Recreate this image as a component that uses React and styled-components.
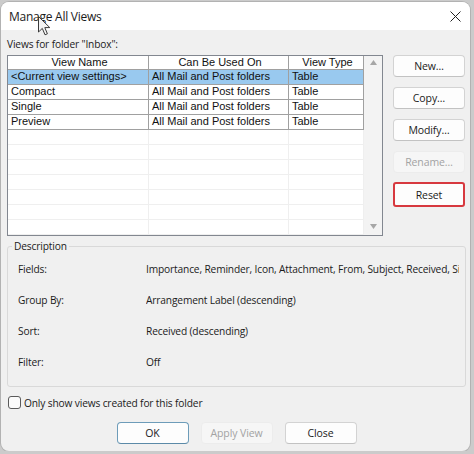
import React from 'react'
import styled, { createGlobalStyle } from 'styled-components'

const GlobalStyle = createGlobalStyle`
  html, body {
    margin: 0;
    padding: 0;
    background: #cbcbcb;
  }
  body {
    font-family: "Open Sans", "Noto Sans", sans-serif;
    color: #1b1b1b;
  }
`

const Window = styled.div`
  position: relative;
  width: 469px;
  height: 449px;
  margin: 2px 0 0 1px;
  background: #f0f0f0;
  border-radius: 8px;
  overflow: hidden;
  display: flex;
  flex-direction: column;
  box-shadow: 0 0 0 1px rgba(0, 0, 0, 0.12);
`

const TitleBar = styled.div`
  height: 28px;
  flex: none;
  background: #ffffff;
  display: flex;
  align-items: center;
  justify-content: space-between;
  padding-left: 8px;
`

const Title = styled.span`
  font-size: 12px;
  letter-spacing: -0.25px;
  color: #1b1b1b;
`

const CloseBox = styled.div`
  width: 30px;
  height: 28px;
  display: flex;
  align-items: center;
  justify-content: center;
`

const Body = styled.div`
  flex: 1;
  display: flex;
  flex-direction: column;
  padding: 7px 4px 7px 6px;
  font-size: 10.2px;
  letter-spacing: -0.15px;
`

const Label = styled.div`
  height: 14px;
  line-height: 14px;
  margin-bottom: 4px;
`

const TopSection = styled.div`
  display: flex;
  gap: 10px;
`

const ListBox = styled.div`
  width: 376px;
  height: 181px;
  box-sizing: border-box;
  border: 1px solid #828790;
  background: #ffffff;
  display: flex;
`

const Grid = styled.div`
  width: 356px;
  overflow: hidden;
  font-family: "Liberation Sans", Arial, sans-serif;
  font-size: 11px;
  letter-spacing: 0;
`

const Row = styled.div`
  display: grid;
  grid-template-columns: 141px 140px 75px;
  height: ${p => (p.$header ? 14 : 15)}px;
  background: ${p => (p.$selected ? '#99c9ef' : '#ffffff')};
`

const Cell = styled.div`
  box-sizing: border-box;
  border-right: 1px solid ${p => (p.$faint ? '#efefef' : '#a0a0a0')};
  border-bottom: 1px solid ${p => (p.$faint ? '#efefef' : '#a0a0a0')};
  padding-left: 3px;
  line-height: 13px;
  white-space: nowrap;
  overflow: hidden;
  text-align: ${p => (p.$center ? 'center' : 'left')};
  color: #111;
`

const ScrollBar = styled.div`
  width: 18px;
  background: #f3f3f3;
  display: flex;
  flex-direction: column;
  justify-content: space-between;
  align-items: center;
  padding: 4px 0 6px;
  box-sizing: border-box;
`

const ButtonColumn = styled.div`
  display: flex;
  flex-direction: column;
  gap: 10px;
`

const Button = styled.button`
  width: 72px;
  height: ${p => (p.$highlight ? 25 : 22)}px;
  margin-top: ${p => (p.$highlight ? -1 : 0)}px;
  box-sizing: border-box;
  padding: 0;
  font-family: "Open Sans", "Noto Sans", sans-serif;
  font-size: 10.5px;
  letter-spacing: -0.1px;
  color: ${p => (p.disabled ? '#a3a3a3' : '#1b1b1b')};
  background: ${p => (p.disabled ? '#f6f6f6' : '#fdfdfd')};
  border: ${p =>
    p.$highlight
      ? '2px solid #d7393f'
      : p.$primary
      ? '1px solid #6d9cb9'
      : p.disabled
      ? '1px solid #ececec'
      : '1px solid #d3d3d3'};
  border-bottom-color: ${p =>
    p.$highlight ? '#d7393f' : p.$primary ? '#5b8aa8' : p.disabled ? '#ececec' : '#c2c2c2'};
  border-radius: ${p => (p.$highlight ? 3 : 4)}px;
`

const Group = styled.fieldset`
  margin: 3px 0 0 0;
  padding: 0 6px 9px 10px;
  border: 1px solid #d9d9d9;
  border-radius: 3px;
  min-width: 0;
`

const Legend = styled.legend`
  margin-left: -6px;
  padding: 0 2px;
  line-height: 14px;
`

const DescRow = styled.div`
  display: grid;
  grid-template-columns: 128px 1fr;
  height: 31px;
  align-items: center;
`

const DescValue = styled.span`
  white-space: nowrap;
  overflow: hidden;
`

const CheckRow = styled.label`
  margin-top: 8px;
  height: 15px;
  display: flex;
  align-items: center;
  gap: 3px;
  margin-left: 1px;
`

const CheckBox = styled.span`
  width: 13px;
  height: 13px;
  box-sizing: border-box;
  border: 1px solid #5a5a5a;
  border-radius: 3px;
  background: #fbfbfb;
`

const FooterButtons = styled.div`
  margin-top: 12px;
  display: flex;
  justify-content: center;
  gap: 12px;
`

const Cursor = styled.svg`
  position: absolute;
  left: 37px;
  top: 14px;
`

const views = [
  { name: '<Current view settings>', on: 'All Mail and Post folders', type: 'Table' },
  { name: 'Compact', on: 'All Mail and Post folders', type: 'Table' },
  { name: 'Single', on: 'All Mail and Post folders', type: 'Table' },
  { name: 'Preview', on: 'All Mail and Post folders', type: 'Table' },
]

const description = [
  ['Fields:', 'Importance, Reminder, Icon, Attachment, From, Subject, Received, Size, Categories'],
  ['Group By:', 'Arrangement Label (descending)'],
  ['Sort:', 'Received (descending)'],
  ['Filter:', 'Off'],
]

const Arrow = ({ down }) => (
  <svg width="7" height="5" viewBox="0 0 7 5">
    <polygon points={down ? '0,0 7,0 3.5,5' : '0,5 7,5 3.5,0'} fill="#a6a6a6" />
  </svg>
)

export default function App() {
  return (
    <>
      <GlobalStyle />
      <Window>
        <TitleBar>
          <Title>Manage All Views</Title>
          <CloseBox>
            <svg width="11" height="11" viewBox="0 0 11 11">
              <path d="M0.5 0.5 L10.5 10.5 M10.5 0.5 L0.5 10.5" stroke="#222" strokeWidth="1" />
            </svg>
          </CloseBox>
        </TitleBar>
        <Body>
          <Label>Views for folder "Inbox":</Label>
          <TopSection>
            <ListBox>
              <Grid>
                <Row $header>
                  <Cell $center>View Name</Cell>
                  <Cell $center>Can Be Used On</Cell>
                  <Cell $center>View Type</Cell>
                </Row>
                {views.map((v, i) => (
                  <Row key={v.name} $selected={i === 0}>
                    <Cell>{v.name}</Cell>
                    <Cell>{v.on}</Cell>
                    <Cell>{v.type}</Cell>
                  </Row>
                ))}
                {Array.from({ length: 7 }).map((_, i) => (
                  <Row key={'f' + i}>
                    <Cell $faint />
                    <Cell $faint />
                    <Cell $faint />
                  </Row>
                ))}
              </Grid>
              <ScrollBar>
                <Arrow />
                <Arrow down />
              </ScrollBar>
            </ListBox>
            <ButtonColumn>
              <Button>New…</Button>
              <Button>Copy…</Button>
              <Button>Modify…</Button>
              <Button disabled>Rename…</Button>
              <Button $highlight>Reset</Button>
            </ButtonColumn>
          </TopSection>
          <Group>
            <Legend>Description</Legend>
            {description.map(([k, v]) => (
              <DescRow key={k}>
                <span>{k}</span>
                <DescValue>{v}</DescValue>
              </DescRow>
            ))}
          </Group>
          <CheckRow>
            <CheckBox />
            Only show views created for this folder
          </CheckRow>
          <FooterButtons>
            <Button $primary>OK</Button>
            <Button disabled>Apply View</Button>
            <Button>Close</Button>
          </FooterButtons>
        </Body>
        <Cursor width="13" height="20" viewBox="0 0 13 20">
          <path
            d="M0.5 0.5 L0.5 16 L4.3 12.4 L7 18.8 L9.4 17.8 L6.8 11.6 L11.8 11.6 Z"
            fill="#f4f4f4"
            stroke="#3a3a3a"
            strokeWidth="1"
            strokeLinejoin="round"
          />
        </Cursor>
      </Window>
    </>
  )
}
